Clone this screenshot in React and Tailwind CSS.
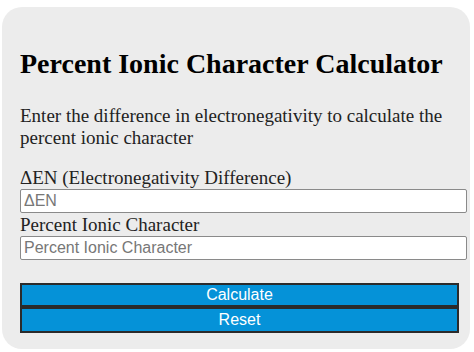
export default function App() {
  return (
    <div className="w-[474px] h-[352px] bg-white pt-[7px] px-[2px] overflow-hidden" style={{ fontFamily: '"Liberation Serif", serif' }}>
      <div className="h-[342px] w-[468px] rounded-[20px] bg-[#ececec] pl-[18px] pr-[6px] pt-[41px]">
        <h1 className="text-[28px] font-bold leading-[32px] text-black whitespace-nowrap">Percent Ionic Character Calculator</h1>
        <p className="mt-[25px] text-[19px] leading-[22px] text-[#222]">Enter the difference in electronegativity to calculate the percent ionic character</p>
        <div className="mt-[18px] text-[19px] leading-[22px] text-[#222]">ΔEN (Electronegativity Difference)</div>
        <input
          className="block w-[447px] h-[24px] bg-white border border-[#8a8a8a] rounded-[2px] px-[3px] text-[16px] text-black placeholder:text-[#777] outline-none"
          style={{ fontFamily: '"Liberation Sans", Arial, sans-serif' }}
          placeholder="ΔEN"
        />
        <div className="mt-[1px] text-[19px] leading-[22px] text-[#222]">Percent Ionic Character</div>
        <input
          className="block w-[447px] h-[24px] bg-white border border-[#8a8a8a] rounded-[2px] px-[3px] text-[16px] text-black placeholder:text-[#777] outline-none"
          style={{ fontFamily: '"Liberation Sans", Arial, sans-serif' }}
          placeholder="Percent Ionic Character"
        />
        <div className="mt-[23px] w-[439px] flex flex-col" style={{ fontFamily: '"Liberation Sans", Arial, sans-serif' }}>
          <button className="h-[24px] bg-[#0592d8] border-2 border-[#2b2b2b] text-white text-[16px] leading-[18px]">Calculate</button>
          <button className="h-[26px] bg-[#0592d8] border-2 border-[#2b2b2b] text-white text-[16px] leading-[18px]">Reset</button>
        </div>
      </div>
    </div>
  );
}
